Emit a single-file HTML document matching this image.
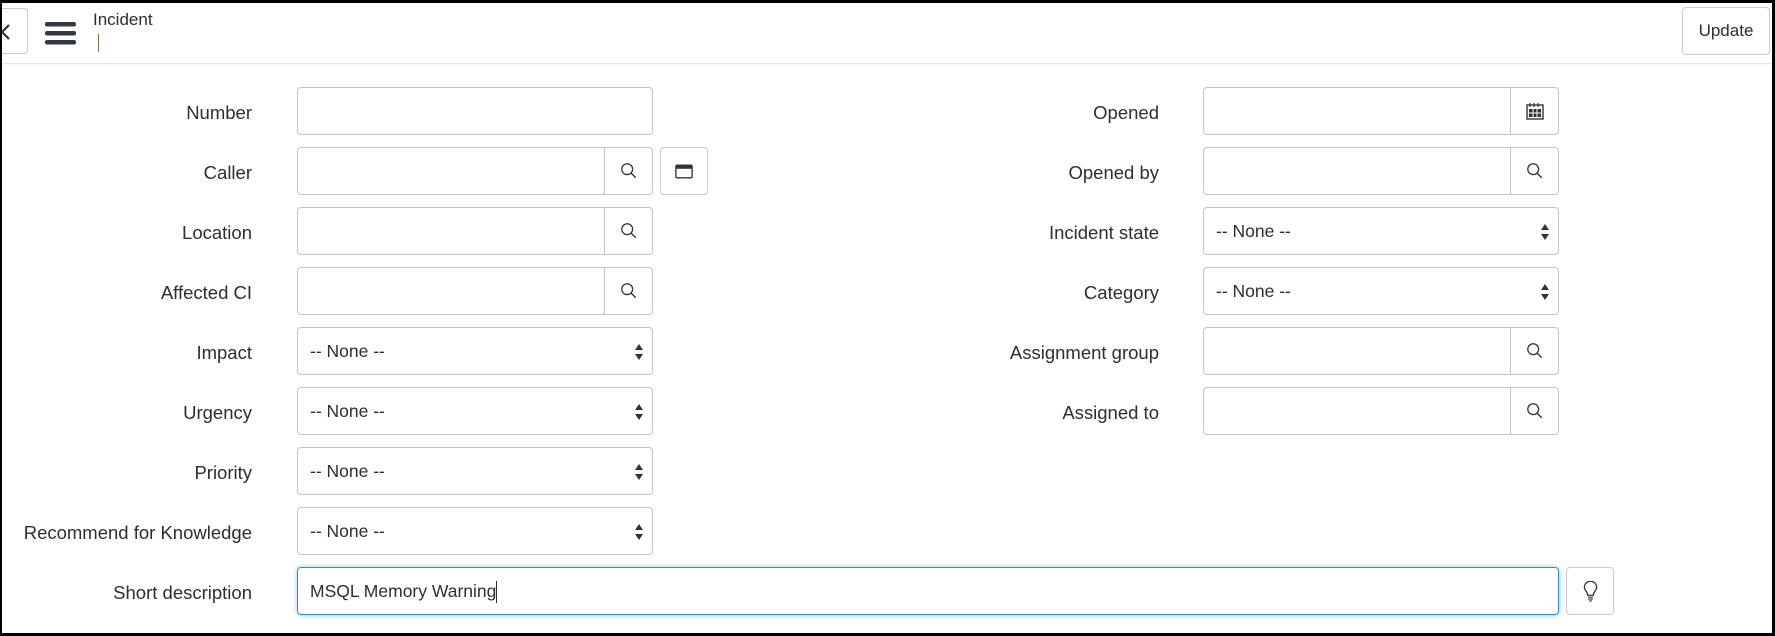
<!DOCTYPE html>
<html><head><style>
*{box-sizing:border-box;margin:0;padding:0}
body{width:1775px;height:636px;overflow:hidden;background:#000;font-family:"Liberation Sans",sans-serif;color:#2e2e2e}
#page{position:absolute;left:2px;top:3px;width:1770px;height:630px;background:#fff;overflow:hidden}
.hdr{position:absolute;left:0;top:0;width:1770px;height:61px;border-bottom:1px solid #e4e4e4;box-shadow:0 1px 3px rgba(0,0,0,.06)}
.btn{position:absolute;border:1px solid #cbcbcb;border-radius:4px;background:#fff}
.lbl{position:absolute;width:250px;text-align:right;font-size:18.5px;color:#2e2e2e}
.inp{position:absolute;height:48px;border:1px solid #c4c4c4;border-radius:4px;background:#fff}
.add{position:absolute;right:0;top:0;width:48px;height:46px;border-left:1px solid #c4c4c4;display:flex;align-items:center;justify-content:center}
.sel{font-size:17.5px;padding-left:12px;line-height:46px;color:#2e2e2e}
.arr{position:absolute;right:8px;top:15px;width:10px}
</style></head><body><div id="page">
<div class="hdr">
 <div class="btn" style="left:-20px;top:5px;width:46px;height:46px"></div>
 <svg style="position:absolute;left:-3px;top:20px" width="14" height="18" viewBox="0 0 14 18"><path d="M10 2 L3 9 L10 16" stroke="#333" stroke-width="2.2" fill="none"/></svg>
 <svg style="position:absolute;left:43px;top:18px" width="31" height="24" viewBox="0 0 31 24"><rect x="0" y="1" width="31" height="4.5" rx="2" fill="#2f3a45"/><rect x="0" y="10" width="31" height="4.5" rx="2" fill="#2f3a45"/><rect x="0" y="19" width="31" height="4.5" rx="2" fill="#2f3a45"/></svg>
 <div style="position:absolute;left:91px;top:7px;font-size:17px">Incident</div>
 <div style="position:absolute;left:96px;top:31px;width:1px;height:18px;background:#8a6d3b"></div>
 <div class="btn" style="left:1680px;top:4px;width:88px;height:48px;font-size:17px;line-height:46px;text-align:center">Update</div>
</div>
<div class="lbl" style="left:0;top:99px">Number</div>
<div class="inp" style="left:295px;top:84px;width:356px"></div>

<div class="lbl" style="left:0;top:159px">Caller</div>
<div class="inp" style="left:295px;top:144px;width:356px"><div class="add"><svg width="18" height="18" viewBox="0 0 20 20"><circle cx="8" cy="8" r="6" stroke="#333" stroke-width="1.4" fill="none"/><path d="M12.5 12.5 L17.5 17.5" stroke="#333" stroke-width="1.5"/></svg></div></div>
<div class="btn" style="left:658px;top:144px;width:48px;height:48px;display:flex;align-items:center;justify-content:center"><svg width="18" height="15" viewBox="0 0 20 16"><rect x="1" y="1" width="18" height="14" rx="1.5" stroke="#333" stroke-width="1.5" fill="none"/><rect x="1" y="1" width="18" height="4" fill="#333"/></svg></div>

<div class="lbl" style="left:0;top:219px">Location</div>
<div class="inp" style="left:295px;top:204px;width:356px"><div class="add"><svg width="18" height="18" viewBox="0 0 20 20"><circle cx="8" cy="8" r="6" stroke="#333" stroke-width="1.4" fill="none"/><path d="M12.5 12.5 L17.5 17.5" stroke="#333" stroke-width="1.5"/></svg></div></div>

<div class="lbl" style="left:0;top:279px">Affected CI</div>
<div class="inp" style="left:295px;top:264px;width:356px"><div class="add"><svg width="18" height="18" viewBox="0 0 20 20"><circle cx="8" cy="8" r="6" stroke="#333" stroke-width="1.4" fill="none"/><path d="M12.5 12.5 L17.5 17.5" stroke="#333" stroke-width="1.5"/></svg></div></div>

<div class="lbl" style="left:0;top:339px">Impact</div>
<div class="inp" style="left:295px;top:324px;width:356px"><div class="sel">-- None --</div><svg class="arr" width="10" height="18" viewBox="0 0 10 18"><path d="M5 1 L9 7 L1 7Z M5 17 L9 11 L1 11Z" fill="#333"/></svg></div>

<div class="lbl" style="left:0;top:399px">Urgency</div>
<div class="inp" style="left:295px;top:384px;width:356px"><div class="sel">-- None --</div><svg class="arr" width="10" height="18" viewBox="0 0 10 18"><path d="M5 1 L9 7 L1 7Z M5 17 L9 11 L1 11Z" fill="#333"/></svg></div>

<div class="lbl" style="left:0;top:459px">Priority</div>
<div class="inp" style="left:295px;top:444px;width:356px"><div class="sel">-- None --</div><svg class="arr" width="10" height="18" viewBox="0 0 10 18"><path d="M5 1 L9 7 L1 7Z M5 17 L9 11 L1 11Z" fill="#333"/></svg></div>

<div class="lbl" style="left:0;top:519px">Recommend for Knowledge</div>
<div class="inp" style="left:295px;top:504px;width:356px"><div class="sel">-- None --</div><svg class="arr" width="10" height="18" viewBox="0 0 10 18"><path d="M5 1 L9 7 L1 7Z M5 17 L9 11 L1 11Z" fill="#333"/></svg></div>

<div class="lbl" style="left:0;top:579px">Short description</div>
<div class="inp" style="left:295px;top:564px;width:1262px;border-color:#2a8cf0;box-shadow:0 0 5px rgba(42,140,240,.5)"><div class="sel">MSQL Memory Warning<span style="display:inline-block;width:1px;height:22px;background:#333;vertical-align:middle"></span></div></div>
<div class="btn" style="left:1564px;top:564px;width:48px;height:48px;display:flex;align-items:center;justify-content:center"><svg width="15" height="21" viewBox="0 0 16 22"><path d="M5 15 C5 11 1.5 10 1.5 6.5 A6.5 6.5 0 0 1 14.5 6.5 C14.5 10 11 11 11 15Z" stroke="#333" stroke-width="1.4" fill="none"/><path d="M5.5 17 H10.5 M5.5 19 H10.5 M6.5 21 H9.5" stroke="#333" stroke-width="1.2"/></svg></div>

<div class="lbl" style="left:907px;top:99px">Opened</div>
<div class="inp" style="left:1201px;top:84px;width:356px"><div class="add"><svg width="18" height="18" viewBox="0 0 18 18"><rect x="1" y="3" width="16" height="14" stroke="#333" stroke-width="1.4" fill="none"/><path d="M4 1V5M8 1V5M12 1V5" stroke="#333" stroke-width="1.2"/><rect x="3" y="7" width="12" height="8" fill="#333"/><path d="M3 11H15M7 7V15M11 7V15" stroke="#fff" stroke-width="1"/></svg></div></div>

<div class="lbl" style="left:907px;top:159px">Opened by</div>
<div class="inp" style="left:1201px;top:144px;width:356px"><div class="add"><svg width="18" height="18" viewBox="0 0 20 20"><circle cx="8" cy="8" r="6" stroke="#333" stroke-width="1.4" fill="none"/><path d="M12.5 12.5 L17.5 17.5" stroke="#333" stroke-width="1.5"/></svg></div></div>

<div class="lbl" style="left:907px;top:219px">Incident state</div>
<div class="inp" style="left:1201px;top:204px;width:356px"><div class="sel">-- None --</div><svg class="arr" width="10" height="18" viewBox="0 0 10 18"><path d="M5 1 L9 7 L1 7Z M5 17 L9 11 L1 11Z" fill="#333"/></svg></div>

<div class="lbl" style="left:907px;top:279px">Category</div>
<div class="inp" style="left:1201px;top:264px;width:356px"><div class="sel">-- None --</div><svg class="arr" width="10" height="18" viewBox="0 0 10 18"><path d="M5 1 L9 7 L1 7Z M5 17 L9 11 L1 11Z" fill="#333"/></svg></div>

<div class="lbl" style="left:907px;top:339px">Assignment group</div>
<div class="inp" style="left:1201px;top:324px;width:356px"><div class="add"><svg width="18" height="18" viewBox="0 0 20 20"><circle cx="8" cy="8" r="6" stroke="#333" stroke-width="1.4" fill="none"/><path d="M12.5 12.5 L17.5 17.5" stroke="#333" stroke-width="1.5"/></svg></div></div>

<div class="lbl" style="left:907px;top:399px">Assigned to</div>
<div class="inp" style="left:1201px;top:384px;width:356px"><div class="add"><svg width="18" height="18" viewBox="0 0 20 20"><circle cx="8" cy="8" r="6" stroke="#333" stroke-width="1.4" fill="none"/><path d="M12.5 12.5 L17.5 17.5" stroke="#333" stroke-width="1.5"/></svg></div></div>
</div></body></html>
